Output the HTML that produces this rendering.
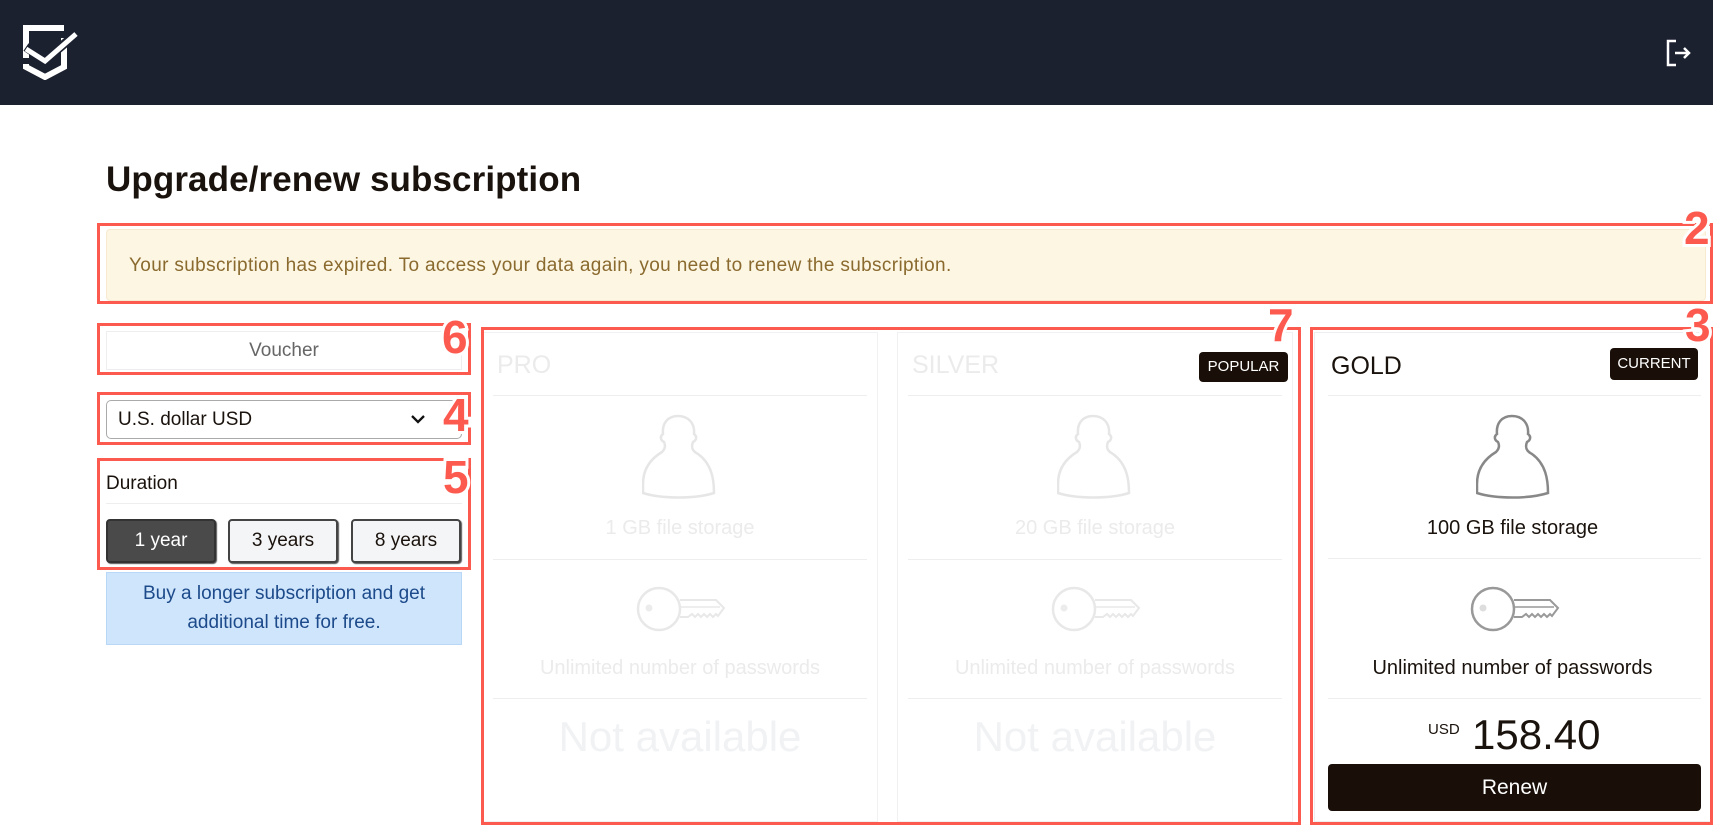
<!DOCTYPE html>
<html><head><meta charset="utf-8"><style>
*{box-sizing:border-box;margin:0;padding:0}
body{width:1720px;height:827px;overflow:hidden;background:#fff;font-family:"Liberation Sans",sans-serif;color:#1a120c;position:relative}
.abs{position:absolute}
.hdr{left:0;top:0;width:1713px;height:105px;background:#1c2130}
.red{position:absolute;border:3px solid #fd5a4f}
.num{position:absolute;font:bold 46px "Liberation Sans",sans-serif;color:#fd5a4f;-webkit-text-stroke:6px #fff;paint-order:stroke fill;line-height:1}
.card{position:absolute;border:1px solid #f1f1f1;background:#fff}
.sep{position:absolute;height:1px;background:#eeeeee}
.c{text-align:center;position:absolute;left:0;right:0}
.dim{color:#ebebeb}
.btn{position:absolute;top:519px;height:44px;width:110px;border:2px solid #444;border-radius:4px;background:#f4f5f7;font-size:19px;text-align:center;line-height:40px;box-shadow:1px 1px 1px #555}
</style></head><body>
<div class="abs hdr"></div>
<svg class="abs" style="left:22px;top:24px" width="56" height="56" viewBox="0 0 56 56">
<path d="M4 34V4H42M42 14V43L23 53L4 43V40" fill="none" stroke="#fff" stroke-width="6" stroke-linejoin="miter"/>
<path d="M4 23L23 36L54 10" fill="none" stroke="#1c2130" stroke-width="9"/>
<path d="M4 25L23 37L54 10" fill="none" stroke="#fff" stroke-width="5"/>
</svg>
<svg class="abs" style="left:1664px;top:38px" width="30" height="30" viewBox="0 0 30 30" fill="none" stroke="#fff" stroke-width="2.5">
<path d="M12 3H4V27H12"/><path d="M11 15H25M20 10L25 15L20 20"/>
</svg>
<div class="abs" style="left:106px;top:160px;font-size:35px;font-weight:bold;letter-spacing:0.1px;color:#1a120c">Upgrade/renew subscription</div>

<div class="abs" style="left:106px;top:229px;width:1600px;height:72px;background:#fdf6e3;border:1px solid #f7ead0;border-radius:4px"></div>
<div class="abs" style="left:129px;top:255px;font-size:19px;color:#8a6a2e;letter-spacing:0.35px">Your subscription has expired. To access your data again, you need to renew the subscription.</div>
<div class="red" style="left:97px;top:223px;width:1616px;height:81px"></div>
<div class="num" style="left:1684px;top:205px">2</div>

<div class="abs" style="left:106px;top:331px;width:356px;height:39px;border:1px solid #eee;text-align:center;line-height:37px;font-size:19px;color:#666">Voucher</div>
<div class="red" style="left:97px;top:323px;width:374px;height:52px"></div>
<div class="num" style="left:442px;top:314px">6</div>

<div class="abs" style="left:106px;top:400px;width:356px;height:39px;border:1px solid #aaa;border-radius:5px;font-size:19px;line-height:37px;padding-left:11px">U.S. dollar USD</div>
<svg class="abs" style="left:410px;top:414px" width="16" height="10" viewBox="0 0 16 10"><path d="M2 2L8 8L14 2" fill="none" stroke="#111" stroke-width="2.3"/></svg>
<div class="red" style="left:97px;top:392px;width:374px;height:53px"></div>
<div class="num" style="left:443px;top:392px">4</div>

<div class="abs" style="left:106px;top:473px;font-size:19px">Duration</div>
<div class="sep" style="left:106px;top:503px;width:356px"></div>
<div class="btn" style="left:106px;background:#4a4a4a;color:#fff;border-color:#333">1 year</div>
<div class="btn" style="left:228px">3 years</div>
<div class="btn" style="left:351px">8 years</div>
<div class="red" style="left:97px;top:458px;width:374px;height:112px"></div>
<div class="num" style="left:443px;top:454px">5</div>

<div class="abs" style="left:106px;top:572px;width:356px;height:73px;background:#cfe5fc;border:1px solid #b9d8f7;color:#1c4a8a;font-size:19px;text-align:center;line-height:29px;padding-top:6px">Buy a longer subscription and get<br>additional time for free.</div>

<svg width="0" height="0" style="position:absolute"><defs>
<g id="person"><path d="M36 2C25 2 20 10 21 20C18 22 18 26 22 28C24 32 23 35 20 38C10 44 1 54 1 70C1 76 1 79 1 79C20 85 53 85 72 79C72 66 70 50 56 40C50 37 49 33 51 28C55 26 55 22 52 20C53 10 47 2 36 2Z" fill="none" stroke-width="2.5"/></g>
<g id="key"><circle cx="23" cy="23" r="21" fill="none" stroke-width="2.5"/><circle cx="13" cy="22" r="3.5" stroke="none"/><path d="M44 14H80L88 22L82 30L80 28L77 31L74 28L71 31L68 28L65 31L62 28L59 31L56 28L52 31H44" fill="none" stroke-width="2"/><path d="M44 21H84" stroke-width="1.5"/></g>
</defs></svg>

<div class="card" style="left:482px;top:332px;width:396px;height:490px">
<div class="abs dim" style="left:14px;top:18px;font-size:25px">PRO</div>
<div class="sep" style="left:10px;top:62px;width:374px"></div>
<svg class="abs" style="left:159px;top:81px" width="74" height="85" viewBox="0 0 74 85" stroke="#e6e6e6"><use href="#person"/></svg>
<div class="c dim" style="top:184px;font-size:20px">1 GB file storage</div>
<div class="sep" style="left:10px;top:226px;width:374px"></div>
<svg class="abs" style="left:153px;top:253px" width="92" height="46" viewBox="0 0 92 46" stroke="#e8e8e8" fill="#ececec"><use href="#key"/></svg>
<div class="c dim" style="top:324px;font-size:20px">Unlimited number of passwords</div>
<div class="sep" style="left:10px;top:365px;width:374px"></div>
<div class="c" style="top:380px;font-size:42px;color:#f1f2f4">Not available</div>
</div>

<div class="card" style="left:897px;top:332px;width:396px;height:490px">
<div class="abs dim" style="left:14px;top:18px;font-size:25px">SILVER</div>
<div class="abs" style="left:301px;top:19px;width:89px;height:30px;background:#1a0f08;color:#fff;border-radius:4px;font-size:15px;text-align:center;line-height:30px">POPULAR</div>
<div class="sep" style="left:10px;top:62px;width:374px"></div>
<svg class="abs" style="left:159px;top:81px" width="74" height="85" viewBox="0 0 74 85" stroke="#e6e6e6"><use href="#person"/></svg>
<div class="c dim" style="top:184px;font-size:20px">20 GB file storage</div>
<div class="sep" style="left:10px;top:226px;width:374px"></div>
<svg class="abs" style="left:153px;top:253px" width="92" height="46" viewBox="0 0 92 46" stroke="#e8e8e8" fill="#ececec"><use href="#key"/></svg>
<div class="c dim" style="top:324px;font-size:20px">Unlimited number of passwords</div>
<div class="sep" style="left:10px;top:365px;width:374px"></div>
<div class="c" style="top:380px;font-size:42px;color:#f1f2f4">Not available</div>
</div>
<div class="red" style="left:481px;top:327px;width:820px;height:498px"></div>
<div class="num" style="left:1268px;top:302px">7</div>

<div class="card" style="left:1314px;top:332px;width:397px;height:490px;border-color:#eee">
<div class="abs" style="left:16px;top:19px;font-size:25px">GOLD</div>
<div class="abs" style="left:295px;top:15px;width:88px;height:32px;background:#1a0f08;color:#fff;border-radius:4px;font-size:15px;text-align:center;line-height:32px">CURRENT</div>
<div class="sep" style="left:13px;top:62px;width:373px"></div>
<svg class="abs" style="left:161px;top:81px" width="74" height="85" viewBox="0 0 74 85" stroke="#888"><use href="#person"/></svg>
<div class="c" style="top:184px;font-size:20px">100 GB file storage</div>
<div class="sep" style="left:13px;top:225px;width:373px"></div>
<svg class="abs" style="left:155px;top:253px" width="92" height="46" viewBox="0 0 92 46" stroke="#999" fill="#ddd"><use href="#key"/></svg>
<div class="c" style="top:324px;font-size:20px">Unlimited number of passwords</div>
<div class="sep" style="left:13px;top:365px;width:373px"></div>
<div class="abs" style="left:113px;top:388px;font-size:15px">USD</div>
<div class="abs" style="left:157px;top:378px;font-size:42px">158.40</div>
<div class="abs" style="left:13px;top:431px;width:373px;height:47px;background:#1a0f08;border-radius:4px;color:#fff;font-size:21px;text-align:center;line-height:47px">Renew</div>
</div>
<div class="red" style="left:1310px;top:327px;width:403px;height:498px"></div>
<div class="num" style="left:1685px;top:302px">3</div>
</body></html>
